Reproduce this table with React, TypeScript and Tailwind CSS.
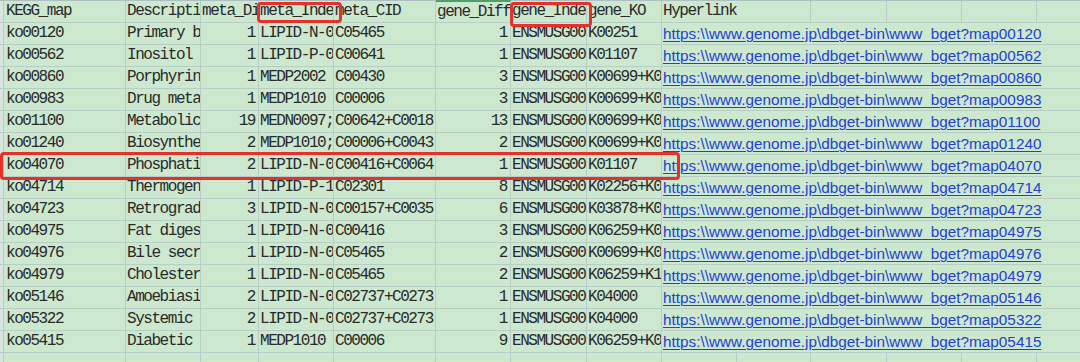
import React from "react";

type Row = {
  a: string;
  b: string;
  c: string;
  d: string;
  e: string;
  f: string;
  g: string;
  h: string;
};

const rows: Row[] = [
  { a: "ko00120", b: "Primary bile acid biosynthesis", c: "1", d: "LIPID-N-0102", e: "C05465", f: "1", g: "ENSMUSG00000026170", h: "K00251" },
  { a: "ko00562", b: "Inositol phosphate metabolism", c: "1", d: "LIPID-P-0063", e: "C00641", f: "1", g: "ENSMUSG00000031497", h: "K01107" },
  { a: "ko00860", b: "Porphyrin and chlorophyll metabolism", c: "1", d: "MEDP2002", e: "C00430", f: "3", g: "ENSMUSG00000060803", h: "K00699+K00700" },
  { a: "ko00983", b: "Drug metabolism - other enzymes", c: "1", d: "MEDP1010", e: "C00006", f: "3", g: "ENSMUSG00000060803", h: "K00699+K00700" },
  { a: "ko01100", b: "Metabolic pathways", c: "19", d: "MEDN0097;MEDP1010", e: "C00642+C0018", f: "13", g: "ENSMUSG00000060803", h: "K00699+K00700" },
  { a: "ko01240", b: "Biosynthesis of cofactors", c: "2", d: "MEDP1010;MEDP2002", e: "C00006+C0043", f: "2", g: "ENSMUSG00000060803", h: "K00699+K00700" },
  { a: "ko04070", b: "Phosphatidylinositol signaling system", c: "2", d: "LIPID-N-0063", e: "C00416+C0064", f: "1", g: "ENSMUSG00000031497", h: "K01107" },
  { a: "ko04714", b: "Thermogenesis", c: "1", d: "LIPID-P-1029", e: "C02301", f: "8", g: "ENSMUSG00000026170", h: "K02256+K02257" },
  { a: "ko04723", b: "Retrograde endocannabinoid signaling", c: "3", d: "LIPID-N-0102", e: "C00157+C0035", f: "6", g: "ENSMUSG00000026170", h: "K03878+K03879" },
  { a: "ko04975", b: "Fat digestion and absorption", c: "1", d: "LIPID-N-0063", e: "C00416", f: "3", g: "ENSMUSG00000026170", h: "K06259+K00700" },
  { a: "ko04976", b: "Bile secretion", c: "1", d: "LIPID-N-0102", e: "C05465", f: "2", g: "ENSMUSG00000060803", h: "K00699+K00700" },
  { a: "ko04979", b: "Cholesterol metabolism", c: "1", d: "LIPID-N-0102", e: "C05465", f: "2", g: "ENSMUSG00000026170", h: "K06259+K14456" },
  { a: "ko05146", b: "Amoebiasis", c: "2", d: "LIPID-N-0063", e: "C02737+C0273", f: "1", g: "ENSMUSG00000026170", h: "K04000" },
  { a: "ko05322", b: "Systemic lupus erythematosus", c: "2", d: "LIPID-N-0063", e: "C02737+C0273", f: "1", g: "ENSMUSG00000026170", h: "K04000" },
  { a: "ko05415", b: "Diabetic cardiomyopathy", c: "1", d: "MEDP1010", e: "C00006", f: "9", g: "ENSMUSG00000026170", h: "K06259+K00700" },
];

const mono =
  "font-['Liberation_Mono',monospace] text-[16px] tracking-[-1.45px] text-[#2a2a2a]";
const cell =
  "shrink-0 h-full overflow-hidden whitespace-nowrap border-r border-[#b7cdc6]";

function Cells({ r, header }: { r: Row; header?: boolean }) {
  return (
    <>
      <div className={`${cell} w-[4px] bg-[#d6e6dc]`} />
      <div className={`${cell} w-[122px] pl-[2px] ${mono}`}>{r.a}</div>
      <div className={`${cell} w-[75px] pl-[1px] ${mono}`}>{r.b}</div>
      <div className={`${cell} w-[58px] ${header ? "pl-[1px] text-left" : "pr-[3px] text-right"} ${mono}`}>{r.c}</div>
      <div className={`${cell} w-[75px] pl-[1px] ${mono}`}>{r.d}</div>
      <div className={`${cell} w-[102px] pl-[1px] ${mono}`}>{r.e}</div>
      <div
        className={`${cell} w-[75px] ${header ? "pl-[1px] text-left border-t-2 border-t-[#4f9d6b] -mt-[1px] h-[23px]" : "pr-[3px] text-right"} ${mono}`}
      >
        {r.f}
      </div>
      <div className={`${cell} w-[76px] pl-[1px] ${mono}`}>{r.g}</div>
      <div className={`${cell} w-[75px] pl-[1px] ${mono}`}>{r.h}</div>
    </>
  );
}

const linkCls =
  "font-['Liberation_Sans',Arial,sans-serif] text-[15.3px] text-[#2540d2] underline decoration-[1px] underline-offset-[2px]";

export default function App() {
  return (
    <div className="relative w-[1080px] h-[362px] overflow-hidden bg-[#cce8cf]">
      <div className="flex flex-col border-t border-[#aebfc2] leading-[21px]">
        {/* header */}
        <div className="flex h-[22px] border-b border-[#b7cdc6]">
          <Cells
            header
            r={{
              a: "KEGG_map",
              b: "Description",
              c: "meta_Diff",
              d: "meta_Index",
              e: "meta_CID",
              f: "gene_Diff",
              g: "gene_Index",
              h: "gene_KO",
            }}
          />
          <div className={`${cell} w-[149px] pl-[1px] ${mono}`}>Hyperlink</div>
          <div className={`${cell} w-[76px]`} />
          <div className={`${cell} w-[75px]`} />
          <div className={`${cell} w-[75px]`} />
          <div className={`${cell} w-[75px]`} />
        </div>
        {rows.map((r) => (
          <div key={r.a} className="flex h-[22px] border-b border-[#b7cdc6]">
            <Cells r={r} />
            <div className="flex-1 h-full whitespace-nowrap pl-[1px]">
              <span className={linkCls}>
                {"https:\\\\www.genome.jp\\dbget-bin\\www_bget?map" + r.a.slice(2)}
              </span>
            </div>
          </div>
        ))}
        {/* empty row */}
        <div className="flex h-[22px] border-b border-[#b7cdc6]">
          <Cells r={{ a: "", b: "", c: "", d: "", e: "", f: "", g: "", h: "" }} />
          <div className={`${cell} w-[75px]`} />
          <div className={`${cell} w-[74px]`} />
          <div className={`${cell} w-[76px]`} />
          <div className={`${cell} w-[75px]`} />
          <div className={`${cell} w-[75px]`} />
          <div className={`${cell} w-[75px]`} />
        </div>
      </div>

      {/* red annotation boxes */}
      <div className="absolute left-[257px] top-[2px] w-[85px] h-[21px] rounded-[4px] border-[3px] border-[#e8302a]" />
      <div className="absolute left-[510px] top-[2px] w-[82px] h-[25px] rounded-[4px] border-[3px] border-[#e8302a]" />
      <div className="absolute left-[0px] top-[152px] w-[680px] h-[28px] rounded-[4px] border-[3px] border-[#e8302a]" />
    </div>
  );
}
